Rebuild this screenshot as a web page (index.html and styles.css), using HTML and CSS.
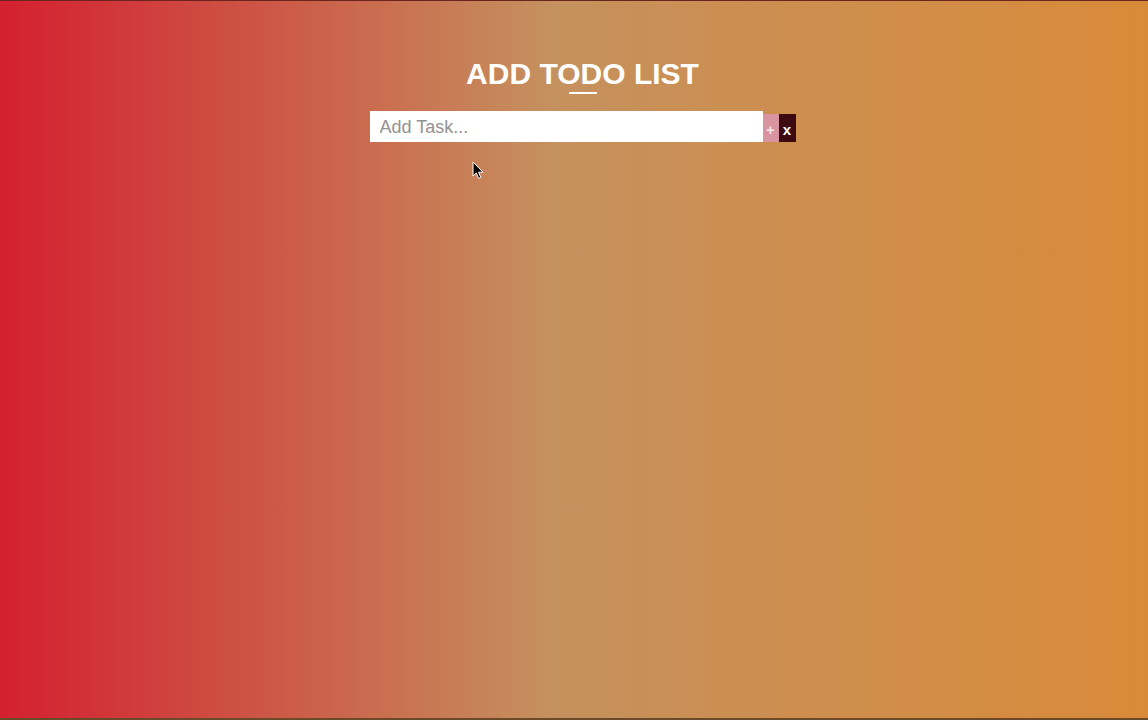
FILE: index.html
```html
<!DOCTYPE html>
<html lang="en">
<head>
<meta charset="utf-8">
<title>Todo List</title>
<link rel="stylesheet" href="styles.css">
</head>
<body>
<div class="page">
  <main class="app">
    <h1 class="title">ADD TODO LIST</h1>
    <form class="add-form" onsubmit="return false">
      <input class="task-input" type="text" placeholder="Add Task...">
      <button class="btn btn-add" type="button">+</button>
      <button class="btn btn-clear" type="button">x</button>
    </form>
  </main>
  <svg class="cursor" width="12" height="19" viewBox="0 0 12 19" aria-hidden="true">
    <path d="M1 1 L1 15 L4.3 12 L6.6 17.4 L8.8 16.4 L6.5 11.2 L11 11.2 Z" fill="#000" stroke="#fff" stroke-width="1"/>
  </svg>
</div>
</body>
</html>
```

FILE: styles.css
```css
html, body {
  margin: 0;
  padding: 0;
}

body {
  font-family: "Liberation Sans", Arial, Helvetica, sans-serif;
}

.page {
  position: relative;
  box-sizing: border-box;
  height: 720px;
  background: linear-gradient(to right, #d42030 0%, #c5915e 48%, #d98a39 100%);
  border-top: 1px solid #6a2420;
  border-bottom: 2px solid #6b4a2a;
  overflow: hidden;
}

.app {
  display: flex;
  flex-direction: column;
  align-items: center;
  padding-left: 17px;
  padding-top: 55px;
}

.title {
  margin: 0;
  font-size: 30px;
  line-height: 36px;
  font-weight: 700;
  color: #ffffff;
  text-align: center;
}

.title::after {
  content: "";
  display: block;
  width: 28px;
  height: 2px;
  margin: 0 auto;
  background: #ffffff;
}

.add-form {
  display: flex;
  align-items: flex-end;
  margin-top: 17px;
}

.task-input {
  box-sizing: border-box;
  width: 393px;
  height: 31px;
  padding: 2px 10px 0;
  border: none;
  outline: none;
  background: #ffffff;
  font-family: "Liberation Sans", Arial, Helvetica, sans-serif;
  font-size: 18px;
  color: #333;
}

.task-input::placeholder {
  color: #929292;
}

.btn {
  box-sizing: border-box;
  height: 28px;
  padding: 2px 0 0;
  border: none;
  font-family: "Liberation Sans", Arial, Helvetica, sans-serif;
  font-size: 15px;
  font-weight: 700;
  color: #ffffff;
  cursor: pointer;
}

.btn-add {
  width: 16px;
  background: #d9959f;
  color: #f6e6e8;
}

.btn-clear {
  width: 17px;
  background: #3e0a12;
}

.cursor {
  position: absolute;
  left: 472px;
  top: 160px;
}
```
